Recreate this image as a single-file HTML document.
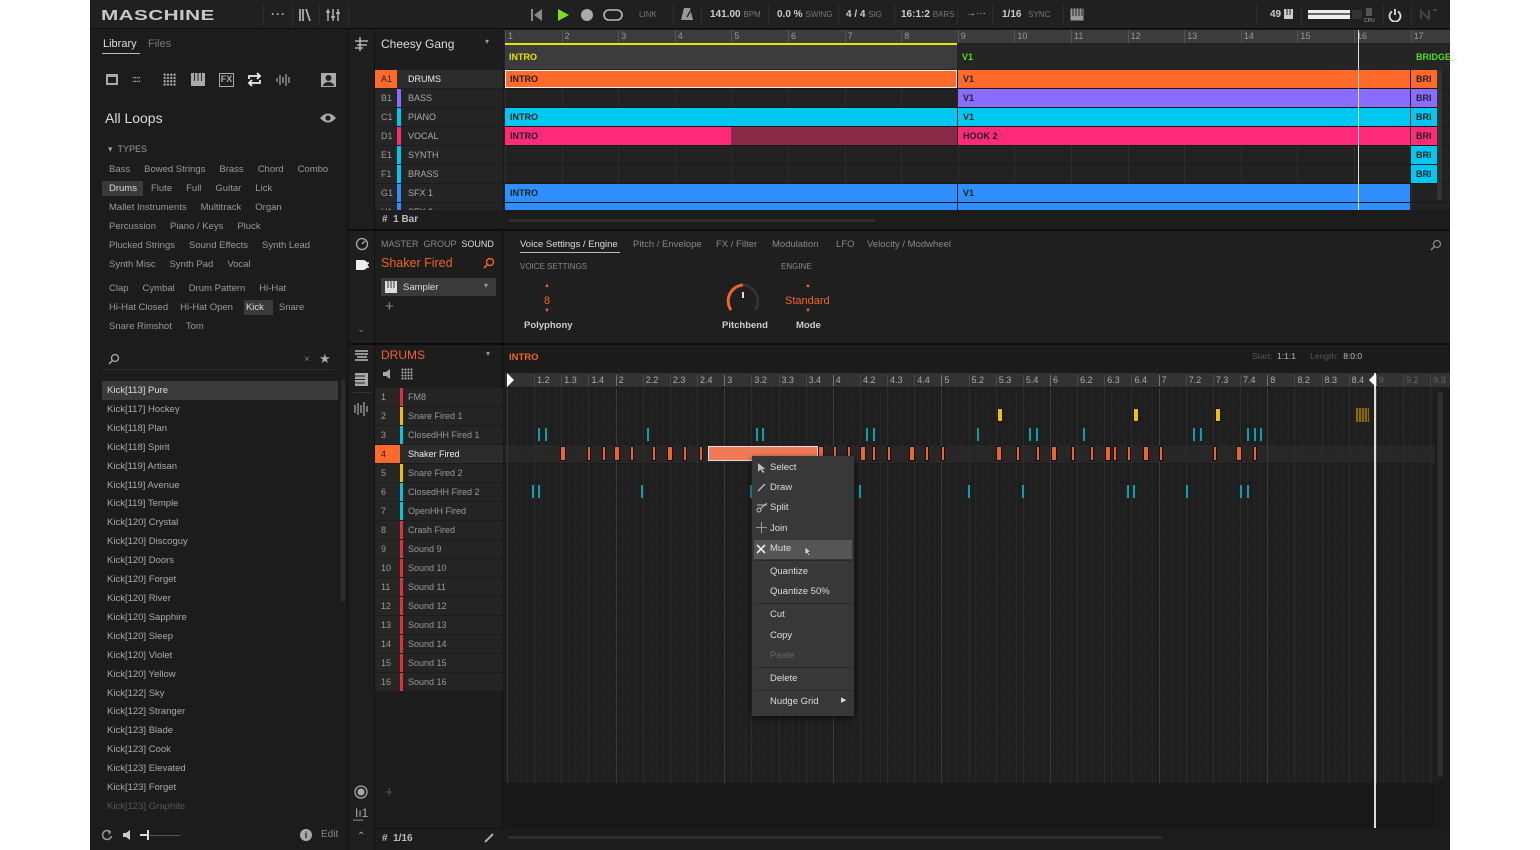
<!DOCTYPE html>
<html><head><meta charset="utf-8">
<style>
*{margin:0;padding:0;box-sizing:border-box}
body{width:1540px;height:850px;background:#fff;position:relative;overflow:hidden;font-family:"Liberation Sans",sans-serif;color:#bbb;font-size:10px}
.a{position:absolute}
#app{position:absolute;left:90px;top:0;width:1360px;height:850px;background:#1a1a1a;overflow:hidden}
.t{position:absolute;white-space:nowrap}
.dim{color:#777}
.b{font-weight:bold}
.sep{position:absolute;top:4px;width:1px;height:21px;background:#2e2e2e}
</style></head><body>
<div id="app">
<!-- top bar -->
<div class="a" style="left:0;top:0;width:1360px;height:29px;background:#202020;border-bottom:1px solid #0e0e0e"></div>
<div class="t b" style="left:11px;top:7px;font-size:15px;color:#c8c8c8;letter-spacing:0.3px;transform:scaleX(1.38);transform-origin:left">MASCHINE</div>
<div class="sep" style="left:173px"></div><div class="sep" style="left:202px"></div><div class="sep" style="left:229px"></div><div class="sep" style="left:258px"></div>
<div class="t b" style="left:181px;top:7px;font-size:12px;color:#aaa;letter-spacing:1px">···</div>
<svg class="a" style="left:208px;top:8px" width="14" height="14"><path d="M2 1v12M5 1v12M8 1l4 12" stroke="#bbb" stroke-width="1.6" fill="none"/></svg>
<svg class="a" style="left:236px;top:8px" width="14" height="14"><path d="M2 1v12M7 1v12M12 1v12M0 4h4M5 9h4M10 5h4" stroke="#bbb" stroke-width="1.4" fill="none"/></svg>
<svg class="a" style="left:440px;top:8px" width="14" height="14"><path d="M2 1v12" stroke="#888" stroke-width="2"/><path d="M12 1L4 7l8 6z" fill="#888"/></svg>
<svg class="a" style="left:466px;top:8px" width="14" height="14"><path d="M2 1l11 6-11 6z" fill="#7ddc1f"/></svg>
<div class="a" style="left:491px;top:9px;width:12px;height:12px;border-radius:6px;background:#aaa"></div>
<svg class="a" style="left:513px;top:8px" width="20" height="14"><path d="M6 2h8a5 5 0 0 1 0 10H6a5 5 0 0 1 0-10" stroke="#bbb" stroke-width="1.6" fill="none"/></svg>
<div class="t dim" style="left:549px;top:10px;font-size:8px">LINK</div>
<div class="sep" style="left:583px"></div>
<svg class="a" style="left:590px;top:7px" width="14" height="14"><path d="M4 1h6l3 12H1z" fill="#999"/><path d="M7 10l4-7" stroke="#222" stroke-width="1.4"/></svg>
<div class="sep" style="left:611px"></div>
<div class="t b" style="left:620px;top:9px;font-size:10px;color:#ccc">141.00 <span class="dim" style="font-size:8px;font-weight:normal">BPM</span></div>
<div class="sep" style="left:678px"></div>
<div class="t b" style="left:687px;top:9px;font-size:10px;color:#ccc">0.0 % <span class="dim" style="font-size:8px;font-weight:normal">SWING</span></div>
<div class="sep" style="left:748px"></div>
<div class="t b" style="left:756px;top:9px;font-size:10px;color:#ccc">4 / 4 <span class="dim" style="font-size:8px;font-weight:normal">SIG</span></div>
<div class="sep" style="left:804px"></div>
<div class="t b" style="left:811px;top:9px;font-size:10px;color:#ccc">16:1:2 <span class="dim" style="font-size:8px;font-weight:normal">BARS</span></div>
<div class="sep" style="left:867px"></div>
<div class="t" style="left:876px;top:8px;font-size:10px;color:#aaa">→···</div>
<div class="sep" style="left:902px"></div>
<div class="t b" style="left:912px;top:9px;font-size:10px;color:#ccc">1/16 <span class="dim" style="font-size:8px;font-weight:normal;margin-left:4px">SYNC</span></div>
<div class="sep" style="left:973px"></div>
<svg class="a" style="left:980px;top:8px" width="14" height="13"><rect x="0.5" y="0.5" width="13" height="12" fill="#999"/><path d="M3 0v8M6 0v8M9 0v8M12 0v8" stroke="#333" stroke-width="1.2"/></svg>
<div class="sep" style="left:1166px"></div>
<div class="t b" style="left:1180px;top:9px;font-size:10px;color:#ccc">49</div>
<svg class="a" style="left:1194px;top:9px" width="9" height="10"><rect width="9" height="10" fill="#ccc"/><path d="M3 0v6M6 0v6" stroke="#222"/></svg>
<div class="sep" style="left:1211px"></div>
<div class="a" style="left:1218px;top:10px;width:42px;height:9px;background:#eee;border-top:2px solid #eee"></div>
<div class="a" style="left:1218px;top:13px;width:42px;height:2px;background:#666"></div>
<div class="a" style="left:1262px;top:10px;width:10px;height:9px;background:#333"></div>
<div class="a" style="left:1276px;top:8px;width:6px;height:8px;background:#555"></div>
<div class="t" style="left:1274px;top:18px;font-size:5px;color:#aaa">CPU</div>
<div class="sep" style="left:1293px"></div>
<svg class="a" style="left:1298px;top:8px" width="14" height="14"><path d="M4 3.5a5.5 5.5 0 1 0 6 0" stroke="#ddd" stroke-width="1.8" fill="none"/><path d="M7 1v6" stroke="#ddd" stroke-width="1.8"/></svg>
<div class="sep" style="left:1321px"></div>
<svg class="a" style="left:1330px;top:9px" width="18" height="11"><path d="M1 10V2l8 8V1M13 1h4" stroke="#444" stroke-width="2" fill="none"/></svg>

<!-- left panel -->
<div class="a" style="left:0;top:30px;width:258px;height:820px;background:#1c1c1c;border-right:1px solid #111"></div>
<div class="t" style="left:13px;top:38px;font-size:11px;color:#ddd">Library</div>
<div class="a" style="left:12px;top:53px;width:38px;height:1px;background:#bbb"></div>
<div class="t" style="left:58px;top:38px;font-size:11px;color:#777">Files</div>
<div class="a" style="left:16px;top:74px;width:12px;height:11px;border:2px solid #aaa;border-top-width:3px"></div>
<div class="t b" style="left:42px;top:74px;font-size:9px;color:#aaa;letter-spacing:-1px">::::</div>
<div class="a" style="left:73px;top:73px;width:13px;height:13px;background:radial-gradient(circle,#aaa 1px,transparent 1.3px) 0 0/3.3px 3.3px"></div>
<svg class="a" style="left:101px;top:73px" width="14" height="13"><rect width="14" height="13" fill="#aaa"/><path d="M3.5 0v8M7 0v8M10.5 0v8" stroke="#222"/></svg>
<div class="a b" style="left:129px;top:73px;width:15px;height:14px;border:1.5px solid #aaa;font-size:9px;color:#aaa;text-align:center;line-height:11px">FX</div>
<svg class="a" style="left:157px;top:72px" width="15" height="15"><path d="M2 7V4h10M10 1l3 3-3 3M13 8v3H3M5 14l-3-3 3-3" stroke="#eee" stroke-width="1.8" fill="none"/></svg>
<svg class="a" style="left:186px;top:73px" width="14" height="13"><path d="M1 5v4M4 2v10M7 4v6M10 1v12M13 4v6" stroke="#aaa" stroke-width="1.2"/></svg>
<svg class="a" style="left:231px;top:73px" width="15" height="14"><rect width="15" height="14" fill="#aaa"/><circle cx="7.5" cy="5" r="3" fill="#222"/><path d="M2 13a5.5 4 0 0 1 11 0z" fill="#222"/></svg>
<div class="t" style="left:15px;top:110px;font-size:14px;color:#ddd">All Loops</div>
<svg class="a" style="left:229px;top:112px" width="18" height="12"><path d="M1 6Q9-3 17 6Q9 15 1 6z" fill="#aaa"/><circle cx="9" cy="6" r="2.6" fill="#1c1c1c"/></svg>
<div class="t" style="left:18px;top:144px;font-size:9px;color:#999">▾ &nbsp;TYPES</div>
<div style="position:absolute;left:12px;top:181px;width:41px;height:15px;background:#3a3a3a"></div>
<div style="position:absolute;left:154px;top:300px;width:29px;height:15px;background:#3a3a3a"></div>
<div class="t" style="left:19px;top:164px;font-size:9.5px;color:#999"><span>Bass</span><span style="margin-left:14px">Bowed Strings</span><span style="margin-left:14px">Brass</span><span style="margin-left:14px">Chord</span><span style="margin-left:14px">Combo</span></div>
<div class="t" style="left:19px;top:183px;font-size:9.5px;color:#999"><span style="color:#ddd">Drums</span><span style="margin-left:14px">Flute</span><span style="margin-left:14px">Full</span><span style="margin-left:14px">Guitar</span><span style="margin-left:14px">Lick</span></div>
<div class="t" style="left:19px;top:202px;font-size:9.5px;color:#999"><span>Mallet Instruments</span><span style="margin-left:14px">Multitrack</span><span style="margin-left:14px">Organ</span></div>
<div class="t" style="left:19px;top:221px;font-size:9.5px;color:#999"><span>Percussion</span><span style="margin-left:14px">Piano / Keys</span><span style="margin-left:14px">Pluck</span></div>
<div class="t" style="left:19px;top:240px;font-size:9.5px;color:#999"><span>Plucked Strings</span><span style="margin-left:14px">Sound Effects</span><span style="margin-left:14px">Synth Lead</span></div>
<div class="t" style="left:19px;top:259px;font-size:9.5px;color:#999"><span>Synth Misc</span><span style="margin-left:14px">Synth Pad</span><span style="margin-left:14px">Vocal</span></div>
<div class="t" style="left:19px;top:283px;font-size:9.5px;color:#999"><span>Clap</span><span style="margin-left:14px">Cymbal</span><span style="margin-left:14px">Drum Pattern</span><span style="margin-left:14px">Hi-Hat</span></div>
<div class="t" style="left:19px;top:302px;font-size:9.5px;color:#999"><span>Hi-Hat Closed</span><span style="margin-left:12px">Hi-Hat Open</span><span style="margin-left:13px;color:#ddd">Kick</span><span style="margin-left:15px">Snare</span></div>
<div class="t" style="left:19px;top:321px;font-size:9.5px;color:#999"><span>Snare Rimshot</span><span style="margin-left:14px">Tom</span></div>
<svg class="a" style="left:18px;top:353px" width="12" height="12"><circle cx="7" cy="5" r="3.5" stroke="#aaa" stroke-width="1.3" fill="none"/><path d="M4.5 7.5L1 11" stroke="#aaa" stroke-width="1.5"/></svg>
<div class="a" style="left:12px;top:369px;width:232px;height:1px;background:#2c2c2c"></div>
<div class="t" style="left:214px;top:354px;font-size:10px;color:#777">×</div>
<div class="t" style="left:229px;top:351px;font-size:13px;color:#aaa">★</div>
<div class="a" style="left:12px;top:381px;width:236px;height:19px;background:#3a3a3a"></div>
<div class="a" style="left:251px;top:380px;width:4px;height:222px;background:#2c2c2c;border-radius:2px"></div>
<div class="a" style="left:17px;top:382px;font-size:9.5px;color:#aaa;line-height:18.9px">
<div style="color:#ddd">Kick[113] Pure</div><div>Kick[117] Hockey</div><div>Kick[118] Plan</div><div>Kick[118] Spirit</div><div>Kick[119] Artisan</div><div>Kick[119] Avenue</div><div>Kick[119] Temple</div><div>Kick[120] Crystal</div><div>Kick[120] Discoguy</div><div>Kick[120] Doors</div><div>Kick[120] Forget</div><div>Kick[120] River</div><div>Kick[120] Sapphire</div><div>Kick[120] Sleep</div><div>Kick[120] Violet</div><div>Kick[120] Yellow</div><div>Kick[122] Sky</div><div>Kick[122] Stranger</div><div>Kick[123] Blade</div><div>Kick[123] Cook</div><div>Kick[123] Elevated</div><div>Kick[123] Forget</div><div style="color:#555">Kick[123] Graphite</div></div>
<svg class="a" style="left:11px;top:829px" width="12" height="12"><path d="M9.5 3A4.5 4.5 0 1 0 10.5 7" stroke="#999" stroke-width="1.5" fill="none"/><path d="M7 1l3 2-2 3" fill="#999"/></svg>
<svg class="a" style="left:32px;top:830px" width="10" height="10"><path d="M1 3h3l4-3v10L4 7H1z" fill="#ccc"/></svg>
<div class="a" style="left:50px;top:835px;width:40px;height:1px;background:#555"></div>
<div class="a" style="left:50px;top:834px;width:8px;height:2px;background:#ddd"></div>
<div class="a" style="left:57px;top:830px;width:2px;height:10px;background:#ddd"></div>
<div class="a" style="left:210px;top:829px;width:12px;height:12px;border-radius:6px;background:#aaa;color:#1c1c1c;font-size:9px;font-weight:bold;text-align:center;line-height:12px">i</div>
<div class="t" style="left:231px;top:829px;font-size:10px;color:#888">Edit</div>

<!-- left icon strip -->
<div class="a" style="left:259px;top:30px;width:26px;height:820px;background:#1e1e1e;border-right:1px solid #111"></div>
<div class="a" style="left:259px;top:229px;width:1190px;height:2px;background:#0e0e0e"></div>
<div class="a" style="left:259px;top:343px;width:1190px;height:2px;background:#0e0e0e"></div>
<svg class="a" style="left:264px;top:36px" width="16" height="16"><path d="M6 1v14M1 5h13M3 9h10M1 12h8" stroke="#ccc" stroke-width="1.3"/></svg>
<svg class="a" style="left:265px;top:237px" width="14" height="14"><circle cx="7" cy="7" r="5.5" stroke="#aaa" stroke-width="1.3" fill="none"/><path d="M7 7l3-3" stroke="#aaa" stroke-width="1.3"/></svg>
<svg class="a" style="left:264px;top:258px" width="15" height="14"><path d="M2 2h7a5 5 0 0 1 0 10H2z" fill="#eee"/><path d="M11 5h4M11 9h4" stroke="#eee" stroke-width="1.5"/></svg>
<div class="t" style="left:267px;top:324px;font-size:10px;color:#777">⌄</div>
<svg class="a" style="left:264px;top:350px" width="15" height="12"><path d="M1 1h13M1 4h13M3 7h10M1 10h13" stroke="#bbb" stroke-width="1.4"/></svg>
<svg class="a" style="left:265px;top:373px" width="13" height="13"><rect width="13" height="13" fill="#aaa"/><path d="M0 3h10M0 6.5h10M0 10h10" stroke="#1e1e1e" stroke-width="1"/></svg>
<div class="a" style="left:263px;top:392px;width:18px;height:1px;background:#333"></div>
<svg class="a" style="left:264px;top:402px" width="15" height="14"><path d="M1 3v8M4 1v12M7 3v8M10 0v14M13 4v6" stroke="#aaa" stroke-width="1.2"/></svg>
<svg class="a" style="left:264px;top:785px" width="14" height="14"><circle cx="7" cy="7" r="6" stroke="#aaa" stroke-width="1.3" fill="none"/><circle cx="7" cy="7" r="3.5" fill="#aaa"/></svg>
<div class="t" style="left:265px;top:806px;font-size:12px;color:#aaa">I͟ı1</div>
<div class="t" style="left:267px;top:831px;font-size:10px;color:#aaa">⌃</div>

<!-- track list -->
<div class="a" style="left:285px;top:30px;width:128px;height:199px;background:#1d1d1d"></div>
<div class="t" style="left:291px;top:37px;font-size:12px;color:#ddd">Cheesy Gang</div>
<div class="t" style="left:395px;top:37px;font-size:8px;color:#999">▾</div>
<div id="tracks"></div>
<div class="a" style="left:285px;top:210px;width:128px;height:19px;background:#1d1d1d"></div>
<div class="t b" style="left:292px;top:214px;font-size:10px;color:#bbb"># &nbsp;1 Bar</div>

<!-- arrange -->
<div class="a" style="left:414px;top:30px;width:946px;height:199px;background:#222"></div>
<div class="a" style="left:415px;top:30px;width:945px;height:13px;background:#3c3c3c"></div>
<div id="aruler"></div>
<div class="a" style="left:415px;top:43px;width:452px;height:2px;background:#e6e600"></div>
<div class="a" style="left:415px;top:45px;width:452px;height:24px;background:#3c3c3c"></div>
<div class="a" style="left:867px;top:45px;width:493px;height:24px;background:#252525"></div>
<div class="t b" style="left:419px;top:52px;font-size:9px;color:#e6e600">INTRO</div>
<div class="t b" style="left:872px;top:52px;font-size:9px;color:#55dd22">V1</div>
<div class="t b" style="left:1326px;top:52px;font-size:9px;color:#55dd22">BRIDGE</div>
<div id="clips"></div>
<div class="a" style="left:1268px;top:30px;width:1px;height:180px;background:#ddd"></div>
<div class="a" style="left:1347px;top:70px;width:5px;height:130px;background:#333;border-radius:2px"></div>
<div class="a" style="left:414px;top:210px;width:946px;height:19px;background:#1c1c1c"></div>
<div class="a" style="left:418px;top:219px;width:368px;height:3px;background:#2e2e2e;border-radius:2px"></div>

<!-- sound panel -->
<div class="a" style="left:285px;top:231px;width:128px;height:112px;background:#1d1d1d;border-right:1px solid #111"></div>
<div class="t" style="left:291px;top:239px;font-size:9px;color:#888">MASTER &nbsp;GROUP &nbsp;<span style="color:#ddd">SOUND</span></div>
<div class="t" style="left:291px;top:256px;font-size:12.5px;color:#f0642a">Shaker Fired</div>
<svg class="a" style="left:393px;top:257px" width="12" height="12"><circle cx="7" cy="5" r="3.5" stroke="#f0642a" stroke-width="1.4" fill="none"/><path d="M4.5 7.5L1 11" stroke="#f0642a" stroke-width="1.6"/></svg>
<div class="a" style="left:291px;top:278px;width:115px;height:18px;background:#3a3a3a"></div>
<svg class="a" style="left:295px;top:281px" width="12" height="12"><rect width="12" height="12" fill="#ddd"/><path d="M3 0v7M6 0v7M9 0v7" stroke="#3a3a3a"/></svg>
<div class="t" style="left:313px;top:282px;font-size:9.5px;color:#ddd">Sampler</div>
<div class="t" style="left:394px;top:281px;font-size:8px;color:#999">▾</div>
<div class="t" style="left:295px;top:298px;font-size:15px;color:#888">+</div>

<!-- voice settings -->
<div class="a" style="left:414px;top:231px;width:946px;height:112px;background:#1f1f1f"></div>
<div class="t" style="left:430px;top:239px;font-size:9.5px;color:#ddd">Voice Settings / Engine</div>
<div class="a" style="left:430px;top:252px;width:100px;height:1px;background:#bbb"></div>
<div class="t" style="left:543px;top:239px;font-size:9.5px;color:#888">Pitch / Envelope</div>
<div class="t" style="left:626px;top:239px;font-size:9.5px;color:#888">FX / Filter</div>
<div class="t" style="left:682px;top:239px;font-size:9.5px;color:#888">Modulation</div>
<div class="t" style="left:746px;top:239px;font-size:9.5px;color:#888">LFO</div>
<div class="t" style="left:777px;top:239px;font-size:9.5px;color:#888">Velocity / Modwheel</div>
<svg class="a" style="left:1340px;top:239px" width="12" height="12"><circle cx="7" cy="5" r="3.5" stroke="#888" stroke-width="1.3" fill="none"/><path d="M4.5 7.5L1 11" stroke="#888" stroke-width="1.5"/></svg>
<div class="t" style="left:430px;top:262px;font-size:8px;color:#888">VOICE SETTINGS</div>
<div class="t" style="left:691px;top:262px;font-size:8px;color:#888">ENGINE</div>
<div class="t" style="left:454px;top:283px;font-size:6px;color:#f0642a">▲</div>
<div class="t" style="left:454px;top:295px;font-size:11px;color:#f0642a">8</div>
<div class="t" style="left:454px;top:308px;font-size:6px;color:#f0642a">▼</div>
<div class="t b" style="left:434px;top:320px;font-size:9.5px;color:#ccc">Polyphony</div>
<svg class="a" style="left:633px;top:281px" width="40" height="34"><path d="M8 29A16 16 0 0 1 20 4" stroke="#f0642a" stroke-width="3" fill="none"/><path d="M20 4A16 16 0 0 1 32 29" stroke="#333" stroke-width="3" fill="none"/><path d="M20 11v6" stroke="#ddd" stroke-width="2"/></svg>
<div class="t b" style="left:632px;top:320px;font-size:9.5px;color:#ccc">Pitchbend</div>
<div class="t" style="left:715px;top:283px;font-size:6px;color:#f0642a">▲</div>
<div class="t" style="left:695px;top:295px;font-size:11px;color:#f0642a">Standard</div>
<div class="t" style="left:715px;top:308px;font-size:6px;color:#f0642a">▼</div>
<div class="t b" style="left:706px;top:320px;font-size:9.5px;color:#ccc">Mode</div>

<!-- pattern left -->
<div class="a" style="left:285px;top:345px;width:128px;height:505px;background:#1d1d1d;border-right:1px solid #111"></div>
<div class="t" style="left:291px;top:348px;font-size:12px;color:#f0642a">DRUMS</div>
<div class="t" style="left:396px;top:349px;font-size:8px;color:#999">▾</div>
<svg class="a" style="left:292px;top:369px" width="10" height="10"><path d="M1 3h3l4-3v10L4 7H1z" fill="#aaa"/></svg>
<div class="a" style="left:311px;top:368px;width:12px;height:12px;background:radial-gradient(circle,#aaa 0.9px,transparent 1.2px) 0 0/3px 3px"></div>
<div id="sounds"></div>
<div class="t" style="left:295px;top:784px;font-size:15px;color:#555">+</div>
<div class="a" style="left:285px;top:828px;width:128px;height:22px;background:#1d1d1d;border-top:1px solid #111"></div>
<div class="t b" style="left:292px;top:833px;font-size:10px;color:#bbb"># &nbsp;1/16</div>
<svg class="a" style="left:394px;top:832px" width="11" height="11"><path d="M1 10L9 2" stroke="#aaa" stroke-width="2"/></svg>

<!-- pattern editor -->
<div class="a" style="left:414px;top:345px;width:946px;height:505px;background:#1b1b1b"></div>
<div class="t b" style="left:419px;top:352px;font-size:9.5px;color:#f0642a">INTRO</div>
<div class="t" style="left:1162px;top:351px;font-size:8.5px;color:#555">Start: &nbsp;<span style="color:#bbb">1:1:1</span> &nbsp; &nbsp; &nbsp;Length: &nbsp;<span style="color:#bbb">8:0:0</span></div>
<div class="a" style="left:415px;top:373px;width:945px;height:14px;background:#333"></div>
<div id="pruler"></div>
<div id="grid" class="a" style="left:415px;top:388px;width:930px;height:395px"></div>
<div id="notes"></div>
<div class="a" style="left:415px;top:783px;width:930px;height:45px;background:#181818"></div>
<div class="a" style="left:1284px;top:373px;width:2px;height:455px;background:#ddd"></div>
<svg class="a" style="left:1278px;top:373px" width="9" height="14"><path d="M8 0v14L1 7z" fill="#fff"/></svg>
<svg class="a" style="left:416px;top:373px" width="9" height="14"><path d="M1 0v14l7-7z" fill="#fff"/></svg>
<div class="a" style="left:1348px;top:392px;width:5px;height:385px;background:#2e2e2e;border-radius:2px"></div>
<div class="a" style="left:414px;top:828px;width:946px;height:22px;background:#1c1c1c"></div>
<div class="a" style="left:418px;top:836px;width:654px;height:3px;background:#2e2e2e;border-radius:2px"></div>

<!-- context menu -->
<div class="a" style="left:662px;top:456px;width:102px;height:260px;background:#383838;box-shadow:0 2px 6px rgba(0,0,0,.6);font-size:9.5px;color:#ddd">
<div class="a" style="left:2px;top:84px;width:98px;height:19px;background:#555"></div>
<div class="t" style="left:18px;top:6px">Select</div>
<div class="t" style="left:18px;top:26px">Draw</div>
<div class="t" style="left:18px;top:46px">Split</div>
<div class="t" style="left:18px;top:67px">Join</div>
<div class="t" style="left:18px;top:87px">Mute</div>
<div class="t" style="left:18px;top:110px">Quantize</div>
<div class="t" style="left:18px;top:130px">Quantize 50%</div>
<div class="t" style="left:18px;top:153px">Cut</div>
<div class="t" style="left:18px;top:174px">Copy</div>
<div class="t" style="left:18px;top:194px;color:#666">Paste</div>
<div class="t" style="left:18px;top:217px">Delete</div>
<div class="t" style="left:18px;top:240px">Nudge Grid</div>
<div class="t" style="left:89px;top:240px;font-size:7px">▶</div>
<div class="a" style="left:2px;top:104px;width:98px;height:1px;background:#2a2a2a"></div>
<div class="a" style="left:2px;top:147px;width:98px;height:1px;background:#2a2a2a"></div>
<div class="a" style="left:2px;top:211px;width:98px;height:1px;background:#2a2a2a"></div>
<div class="a" style="left:2px;top:234px;width:98px;height:1px;background:#2a2a2a"></div>
<svg class="a" style="left:5px;top:6px" width="9" height="11"><path d="M1 1v9l2.5-2.5L6 11l1.5-1L5 7h3.5z" fill="#bbb"/></svg>
<svg class="a" style="left:5px;top:26px" width="10" height="10"><path d="M1 9L8 2" stroke="#bbb" stroke-width="1.4"/></svg>
<svg class="a" style="left:4px;top:45px" width="12" height="12"><circle cx="3" cy="9" r="2" stroke="#bbb" fill="none"/><path d="M4 8l7-6M1 4h10" stroke="#bbb"/></svg>
<svg class="a" style="left:4px;top:66px" width="11" height="11"><path d="M5.5 0v11M0 5.5h11" stroke="#999"/></svg>
<svg class="a" style="left:4px;top:88px" width="10" height="10"><path d="M1 1l8 8M9 1l-8 8" stroke="#eee" stroke-width="1.6"/></svg>
<svg class="a" style="left:52px;top:90px" width="9" height="11"><path d="M1 1v8l2-2 2 3 1-1-2-3h3z" fill="#ccc" stroke="#333" stroke-width=".5"/></svg>
</div>
</div>
<script>
function ad(p,h){document.getElementById(p).insertAdjacentHTML('beforeend',h)}
var T=[['A1','DRUMS','#ff6a2b'],['B1','BASS','#8a6cff'],['C1','PIANO','#00c8f0'],['D1','VOCAL','#ff2a78'],['E1','SYNTH','#00c8f0'],['F1','BRASS','#00c8f0'],['G1','SFX 1','#2f8fff'],['H1','SFX 2','#2f8fff']];
T.forEach(function(t,i){var y=70+i*19;var sel=i==0;
ad('tracks','<div class="a" style="left:285px;top:'+y+'px;width:128px;height:18px;background:'+(sel?'#2c2c2c':'#242424')+'"></div>'+
'<div class="a" style="left:285px;top:'+y+'px;width:22px;height:18px;background:'+(sel?'#ff6a2b':'#262626')+'"></div>'+
(sel?'':'<div class="a" style="left:307px;top:'+y+'px;width:4px;height:18px;background:'+t[2]+'"></div>')+
'<div class="t" style="left:291px;top:'+(y+4)+'px;font-size:9px;color:'+(sel?'#222':'#999')+'">'+t[0]+'</div>'+
'<div class="t" style="left:318px;top:'+(y+4)+'px;font-size:9px;color:'+(sel?'#eee':'#aaa')+'">'+t[1]+'</div>');});
for(var b=1;b<=17;b++){var x=415+(b-1)*56.6;ad('aruler','<div class="a" style="left:'+x+'px;top:30px;width:1px;height:13px;background:#555"></div><div class="t" style="left:'+(x+3)+'px;top:31px;font-size:9px;color:#999">'+b+'</div>');
ad('clips','<div class="a" style="left:'+x+'px;top:70px;width:1px;height:140px;background:#2e2e2e"></div>');}
for(var i=0;i<8;i++)ad('clips','<div class="a" style="left:415px;top:'+(88+i*19)+'px;width:945px;height:1px;background:#191919"></div>');
function clip(x,w,y,c,l,tc){ad('clips','<div class="a" style="left:'+x+'px;top:'+y+'px;width:'+w+'px;height:18px;background:'+c+'"></div>'+(l?'<div class="t b" style="left:'+(x+5)+'px;top:'+(y+4)+'px;font-size:9px;color:'+(tc||'#222')+'">'+l+'</div>':''));}
clip(415,452,70,'#ff6a2b','INTRO');
ad('clips','<div class="a" style="left:415px;top:70px;width:452px;height:18px;border:1.5px solid #eee"></div>');
clip(868,452,70,'#ff6a2b','V1');clip(1321,26,70,'#ff6a2b','BRI');
clip(868,452,89,'#8a6cff','V1');clip(1321,26,89,'#8a6cff','BRI');
clip(415,452,108,'#00c8f0','INTRO');clip(868,452,108,'#00c8f0','V1');clip(1321,26,108,'#00c8f0','BRI');
clip(415,226,127,'#ff2a78','INTRO');clip(641,226,127,'#8a2a48','');clip(868,452,127,'#ff2a78','HOOK 2');clip(1321,26,127,'#ff2a78','BRI');
clip(1321,26,146,'#00c8f0','BRI');clip(1321,26,165,'#00c8f0','BRI');
clip(415,452,184,'#2f8fff','INTRO');clip(868,452,184,'#2f8fff','V1');
clip(415,452,203,'#2f8fff','');clip(868,452,203,'#2f8fff','');
var S=[['FM8','#e0303a'],['Snare Fired 1','#f0c000'],['ClosedHH Fired 1','#00c8d8'],['Shaker Fired','#ff6a2b'],['Snare Fired 2','#f0c000'],['ClosedHH Fired 2','#00c8d8'],['OpenHH Fired','#00c8d8'],['Crash Fired','#e0303a']];
for(var i=0;i<16;i++){var y=388+i*19;var s=S[i]||['Sound '+(i+1),'#e0303a'];var sel=i==3;
ad('sounds','<div class="a" style="left:285px;top:'+y+'px;width:128px;height:18px;background:'+(sel?'#2c2c2c':'#242424')+'"></div>'+
'<div class="a" style="left:285px;top:'+y+'px;width:25px;height:18px;background:'+(sel?'#ff6a2b':'#262626')+'"></div>'+
(sel?'':'<div class="a" style="left:310px;top:'+y+'px;width:3px;height:18px;background:'+s[1]+'"></div>')+
'<div class="t" style="left:291px;top:'+(y+4)+'px;font-size:9px;color:'+(sel?'#222':'#999')+'">'+(i+1)+'</div>'+
'<div class="t" style="left:318px;top:'+(y+4)+'px;font-size:9px;color:'+(sel?'#eee':'#999')+'">'+s[0]+'</div>');}
var bw=108.6;
for(var b=0;b<9.3;b+=0.25){var x=417+b*bw;var bar=Math.floor(b+1e-6),q=Math.round((b-bar)*4);var lab=q==0?(bar+1)+'':(bar+1)+'.'+(q+1);
ad('pruler','<div class="a" style="left:'+x+'px;top:375px;width:1px;height:11px;background:'+(q==0?'#777':'#4a4a4a')+'"></div>'+(b>0?'<div class="t" style="left:'+(x+3)+'px;top:375px;font-size:9px;color:'+(b>=8?'#666':'#aaa')+'">'+lab+'</div>':''));}
var g='';for(var i=0;i<21;i++)g+='<div class="a" style="left:0;top:'+(i*19)+'px;width:930px;height:18px;background:'+(i==3?'#272727':'#1f1f1f')+'"></div>';
for(var k=0;k<=137;k++){var x=2+k*bw/16;var c=k%16==0?'#3a3a3a':(k%4==0?'#2d2d2d':'#252525');g+='<div class="a" style="left:'+x+'px;top:0;width:1px;height:395px;background:'+c+'"></div>';}
document.getElementById('grid').innerHTML=g;
function n(x,y,w,h,c){ad('notes','<div class="a" style="left:'+x+'px;top:'+y+'px;width:'+w+'px;height:'+h+'px;background:'+c+';border:1px solid #111"></div>');}
[560,587,602,614,630,652,667,683,699,818,833,847,860,872,887,909,925,941,996,1016,1036,1051,1071,1090,1105,1113,1127,1143,1159,1213,1236,1253].forEach(function(x,i){n(x-90,446,(i%3==0?6:4),15,'#f0642a')});
n(618,446,110,15,'#f07a58');ad('notes','<div class="a" style="left:618px;top:446px;width:110px;height:15px;border:1.5px solid #ddd"></div>');
[997,1133,1215].forEach(function(x){n(x-90,408,6,14,'#f0c000')});
ad('notes','<div class="a" style="left:1266px;top:408px;width:13px;height:14px;background:repeating-linear-gradient(90deg,#8a6a00 0 2px,#3a2e00 2px 3px)"></div>');
[538,545,647,756,762,866,873,977,1029,1036,1083,1193,1200,1247,1254,1260].forEach(function(x){ad('notes','<div class="a" style="left:'+(x-90)+'px;top:428px;width:2px;height:13px;background:#0aa0b0"></div>')});
[532,538,641,750,859,968,1022,1127,1133,1186,1240,1247].forEach(function(x){ad('notes','<div class="a" style="left:'+(x-90)+'px;top:485px;width:2px;height:13px;background:#0aa0b0"></div>')});
</script>
</body></html>
